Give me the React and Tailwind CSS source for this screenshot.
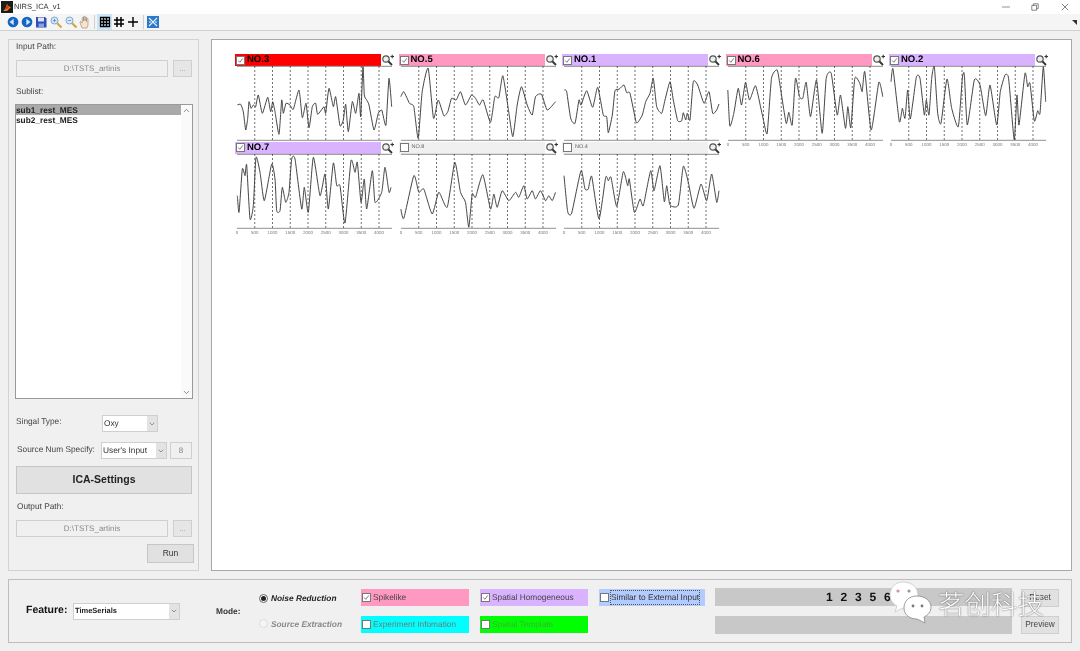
import React from "react";
import { ChevronDown, ChevronUp } from "lucide-react";

const parse = (s, ox, oy) => {
  const p = s.trim().split(/;\s*/).filter(Boolean).map((q) => {
    const [x, y] = q.split(",").map(Number);
    return [(x - ox) / 3, (y - oy) / 3];
  });
  let d = `M${p[0][0].toFixed(1)} ${p[0][1].toFixed(1)}`;
  const k = 0.09;
  for (let i = 0; i < p.length - 1; i++) {
    const a = p[Math.max(0, i - 1)], b = p[i], c = p[i + 1], e = p[Math.min(p.length - 1, i + 2)];
    const c1 = [b[0] + (c[0] - a[0]) * k, b[1] + (c[1] - a[1]) * k];
    const c2 = [c[0] - (e[0] - b[0]) * k, c[1] - (e[1] - b[1]) * k];
    d += `C${c1[0].toFixed(1)} ${c1[1].toFixed(1)} ${c2[0].toFixed(1)} ${c2[1].toFixed(1)} ${c[0].toFixed(1)} ${c[1].toFixed(1)}`;
  }
  return d;
};

const PINK = "bg-[#ff99c2]";
const PURPLE = "bg-[#d9b3ff]";

const charts = [
  { name: "NO.3", bg: "bg-[#ff0000]", on: true, ox: 36, oy: 63, d: "37,180;47,178;55,200;62,255;68,220;72,170;78,190;85,180;92,185;100,150;112,205;128,157;137,200;143,170;150,200;162,268;170,165;175,205;183,175;195,180;205,193;222,135;232,218;243,175;252,248;262,185;272,175;278,208;297,185;302,205;312,130;325,185;332,155;345,242;355,225;362,178;370,260;382,170;392,205;402,145;407,215;414,65;418,150;425,165;432,180;447,255;460,205;470,195;474,210;483,240;492,100;500,185" },
  { name: "NO.5", bg: PINK, on: true, ox: 526.5, oy: 63, d: "526,155;535,140;552,175;565,185;578,280;590,140;608,70;624,220;638,165;655,212;667,200;678,160;692,165;705,140;720,180;738,150;750,160;762,180;773,165;795,232;808,155;820,158;832,92;848,190;862,275;875,180;888,125;905,180;920,210;930,155;948,148;965,195;990,170" },
  { name: "NO.1", bg: PURPLE, on: true, ox: 27, oy: 48, d: "28,120;35,125;47,205;60,220;72,150;78,165;95,122;113,172;128,112;145,195;155,200;160,248;172,195;180,122;192,118;207,105;215,128;225,130;243,215;250,215;262,195;272,155;285,130;295,85;305,170;320,190;330,150;345,95;355,150;368,212;380,212;385,188;392,210;397,190;405,210;415,95;428,105;447,160;462,125;473,190;485,180;492,162" },
  { name: "NO.6", bg: PINK, on: true, labels: true, ox: 37.5, oy: 63, d: "37,135;43,243;55,205;68,130;78,180;90,112;102,165;120,122;135,185;145,230;155,265;168,100;185,75;195,130;212,235;220,202;230,240;240,100;252,155;262,160;272,112;285,215;303,105;320,265;332,100;347,85;365,210;375,150;390,250;397,185;406,248;418,100;433,115;440,140;448,80;467,255;490,112;502,155" },
  { name: "NO.2", bg: PURPLE, on: true, labels: true, ox: 528, oy: 63, d: "528,110;534,72;553,230;562,190;570,220;578,135;586,222;604,97;615,100;628,210;634,165;642,210;650,100;658,65;668,205;678,235;696,102;710,190;730,245;742,100;748,88;757,240;778,105;795,120;812,212;825,120;845,240;856,140;870,90;880,95;888,180;898,285;906,150;912,240;930,85;938,125;945,115;958,228;968,197;975,205;985,65;992,170" },
  { name: "NO.7", bg: PURPLE, on: true, labels: true, ox: 36, oy: 325, d: "37,450;42,500;52,370;60,390;65,358;75,520;85,480;93,335;105,380;118,465;140,355;150,400;155,495;165,495;172,425;182,470;192,440;200,340;210,340;230,490;238,425;250,500;265,335;285,450;300,385;310,490;325,352;335,420;345,420;360,532;378,345;390,380;397,350;408,470;418,400;425,490;442,375;450,470;470,440;480,365;492,440;498,425" },
  { name: "NO.8", bg: "bg-[#f0f0f0]", on: false, labels: true, ox: 526.5, oy: 325, d: "526,490;535,518;565,390;580,440;595,430;620,505;640,440;665,485;688,350;705,440;720,470;730,545;740,445;750,455;772,387;795,490;805,445;815,485;830,435;850,465;870,440;880,455;895,420;905,460;920,435;930,460;945,435;960,465;970,450;980,465;990,440" },
  { name: "NO.4", bg: "bg-[#f0f0f0]", on: false, labels: true, ox: 507, oy: 55, d: "507,120;518,228;530,232;558,105;570,160;580,160;590,122;612,250;632,125;640,135;648,125;665,212;685,108;698,150;703,130;718,230;735,190;745,210;767,105;777,165;795,90;808,198;815,150;825,208;850,208;865,92;880,140;897,218;918,145;935,195;950,115;965,200;972,165" },
];

const Tick = () => (
  <svg viewBox="0 0 9 9" className="w-full h-full">
    <path d="M1.5 4.5 L3.6 6.8 L7.5 1.8" fill="none" stroke="#555" strokeWidth="1" />
  </svg>
);

const Box = ({ on }) => (
  <span className="block w-[9px] h-[9px] shrink-0 bg-white border border-[#777]">
    {on && <Tick />}
  </span>
);

const Magnifier = () => (
  <svg viewBox="0 0 14 12" className="w-[14px] h-[12px] shrink-0">
    <circle cx="5" cy="5" r="3.2" fill="#eee" stroke="#555" strokeWidth="1.2" />
    <path d="M7.5 7.5 L11 11" stroke="#333" strokeWidth="1.8" />
    <path d="M9.5 2.5 H13 M11.2 0.8 V4.2" stroke="#333" strokeWidth="1.1" />
  </svg>
);

function Chart({ c }) {
  const ticks = [0, 500, 1000, 1500, 2000, 2500, 3000, 3500, 4000];
  return (
    <div className="h-[87.5px]">
      <div className="flex h-3 w-[160px] items-center">
        <div className={`flex h-3 w-[146px] items-center pl-[1px] gap-[2px] ${c.bg}`}>
          <Box on={c.on} />
          <span className={c.on ? "pt-[1px] text-[9.5px] font-bold text-black" : "text-[5.5px] text-[#666] pl-[1px]"}>{c.name}</span>
        </div>
        <Magnifier />
      </div>
      <svg width="155" height="75" viewBox="0 0 155 75" className="ml-[2px] overflow-visible">
        <line x1="0" y1="0.3" x2="155" y2="0.3" stroke="#8a8a8a" strokeWidth="1" />
        {ticks.slice(1).map((t) => (
          <line key={t} x1={(t / 500) * 17.75} y1="0" x2={(t / 500) * 17.75} y2="74" stroke="#333" strokeWidth="0.7" strokeDasharray="2 2" />
        ))}
        <path d={parse(c.d, c.ox, c.oy)} fill="none" stroke="#3a3a3a" strokeWidth="0.95" strokeLinejoin="round" />
        <line x1="0" y1="74.3" x2="155" y2="74.3" stroke="#8f8f8f" strokeWidth="1" />
        {c.labels && ticks.map((t) => (
          <text key={t} x={(t / 500) * 17.75} y="79.5" fontSize="4.4" fill="#777" textAnchor="middle" fontFamily="Liberation Sans">{t}</text>
        ))}
      </svg>
    </div>
  );
}

const Select = ({ label, className, text = "text-[8.3px] text-[#333]" }) => (
  <div className={`flex items-center bg-white border border-[#cfcfcf] ${className}`}>
    <span className={`flex-1 pl-[1px] truncate ${text}`}>{label}</span>
    <span className="w-[10px] h-full flex items-center justify-center bg-[#e3e3e3]">
      <ChevronDown size={8} color="#666" />
    </span>
  </div>
);

const Input = () => (
  <div className="flex items-center gap-[5px]">
    <div className="w-[152px] h-[17px] flex items-center justify-center border border-[#cfcfcf] bg-[#f0f0f0] text-[8px] text-[#8a8a8a]">D:\TSTS_artinis</div>
    <div className="w-[19px] h-[17px] flex items-center justify-center border border-[#cfcfcf] bg-[#e6e6e6] text-[8px] text-[#999]">...</div>
  </div>
);

const Label = ({ children, className = "" }) => (
  <div className={`h-3 leading-3 text-[8.3px] text-[#444] ${className}`}>{children}</div>
);

const Check = ({ bg, on, text, label, className = "" }) => (
  <div className={`flex items-center gap-[2px] h-[17px] pl-[1px] ${bg} ${className}`}>
    <Box on={on} />
    <span className={`text-[8.3px] whitespace-nowrap ${text}`}>{label}</span>
  </div>
);

const Arrow = ({ d }) => (
  <svg viewBox="0 0 12 12" className="w-[14px] h-[14px]">
    <circle cx="6" cy="6" r="4.6" fill="#1466c0" />
    <path d={d} fill="#cfe6ff" />
  </svg>
);

const Zoomer = ({ plus }) => (
  <svg viewBox="0 0 14 14" className="w-[14px] h-[14px]">
    <circle cx="5.5" cy="5.5" r="3.5" fill="#d8ecff" stroke="#7ea6c9" strokeWidth="1" />
    <path d={plus ? "M3.8 5.5H7.2M5.5 3.8V7.2" : "M3.8 5.5H7.2"} stroke="#5a87b0" strokeWidth="0.8" />
    <path d="M8.2 8.2 L12.5 12.5" stroke="#d9a441" strokeWidth="2.2" />
  </svg>
);

const Toolbar = () => (
  <div className="flex items-center h-4 pl-[6px] bg-[#f5f5f5]">
    <Arrow d="M3 6 L6.6 3.2 V8.8 Z" />
    <Arrow d="M9 6 L5.4 3.2 V8.8 Z" />
    <svg viewBox="0 0 14 14" className="w-[14px] h-[14px]">
      <path d="M2 2H11L12.5 3.5V12.5H2Z" fill="#2f4fb5" />
      <rect x="4" y="2.5" width="6" height="4" fill="#dfe8fb" />
      <rect x="4.5" y="8.5" width="5.5" height="4" fill="#8aa0de" />
    </svg>
    <span className="w-px" />
    <Zoomer plus />
    <span className="w-px" />
    <Zoomer />
    <svg viewBox="0 0 14 14" className="w-[14px] h-[14px]">
      <path d="M4 13 L2 7.5 C1.6 6.5 2.8 6 3.4 7 L4.2 8 V3 C4.2 2 5.4 2 5.5 3 V6 V2 C5.6 1 6.9 1 7 2 V6 V2.6 C7.1 1.6 8.4 1.6 8.5 2.6 V6.5 V4 C8.6 3 9.9 3 10 4 V9 C10 11 9.4 12 9 13 Z" fill="#fbe3c8" stroke="#9a8f86" strokeWidth="0.7" />
    </svg>
    <span className="ml-[2px] w-px h-[14px] bg-[#cfcfcf]" />
    <span className="ml-[2px] w-[15px] h-4 flex items-center justify-center bg-[#cde6f7]">
      <svg viewBox="0 0 12 12" className="w-[12px] h-[12px]">
        <path d="M1 1.5H11M1 4.5H11M1 7.5H11M1 10.5H11M1.5 1V11M4.5 1V11M7.5 1V11M10.5 1V11" stroke="#000" strokeWidth="1.3" />
      </svg>
    </span>
    <span className="w-[14px] flex justify-center">
      <svg viewBox="0 0 12 12" className="w-[12px] h-[12px]">
        <path d="M1 4H11M1 8H11M4 1V11M8 1V11" stroke="#000" strokeWidth="1.5" />
      </svg>
    </span>
    <span className="w-[14px] flex justify-center">
      <svg viewBox="0 0 12 12" className="w-[12px] h-[12px]">
        <path d="M1 6H11M6 1V11" stroke="#000" strokeWidth="1.4" />
      </svg>
    </span>
    <span className="ml-[3px] w-px h-[14px] bg-[#cfcfcf]" />
    <span className="ml-[2px] w-[14px] flex justify-center">
      <svg viewBox="0 0 12 12" className="w-[12px] h-[12px]">
        <rect width="12" height="12" fill="#2a78c8" />
        <path d="M2 2 L6 6 L10 2 M2 10 L6 6 L10 10 M2 6H4 M8 6H10" stroke="#e8f4ff" strokeWidth="1.1" fill="none" />
      </svg>
    </span>
    <span className="ml-auto mr-[2px]">
      <svg viewBox="0 0 6 6" className="w-[6px] h-[6px]"><path d="M0 1H5V6Z" fill="#333" /></svg>
    </span>
  </div>
);

const Radio = ({ on, label, dim }) => (
  <div className="flex items-center gap-[3px]">
    <span className={`w-[9px] h-[9px] rounded-full border flex items-center justify-center ${dim ? "border-[#ddd] bg-[#f5f5f5]" : "border-[#666] bg-white"}`}>
      {on && <span className="w-[5px] h-[5px] rounded-full bg-[#222]" />}
    </span>
    <span className={`text-[8.3px] font-bold italic whitespace-nowrap ${dim ? "text-[#888]" : "text-[#222]"}`}>{label}</span>
  </div>
);

export default function App() {
  return (
    <div className="relative w-[1080px] h-[651px] overflow-hidden bg-[#f0f0f0] blur-[0.4px] [text-rendering:geometricPrecision] font-['Liberation_Sans',Arial,sans-serif]">
      <div className="flex items-center h-[14px] bg-white">
        <svg viewBox="0 0 12 12" className="ml-[1px] w-[12px] h-[12px]">
          <rect width="12" height="12" fill="#1c1c1c" />
          <path d="M2 10 C4 9 5 6 6 3 C7 5 8 6 10 6 L6 10 Z" fill="#f08020" />
          <path d="M6 3 L8 7 L4 9 Z" fill="#d04010" />
        </svg>
        <span className="ml-[1px] text-[7.5px] text-[#333]">NIRS_ICA_v1</span>
        <svg viewBox="0 0 10 10" className="ml-auto w-[8px] h-[8px]"><path d="M0 5H10" stroke="#777" strokeWidth="1" /></svg>
        <svg viewBox="0 0 10 10" className="ml-[21px] w-[8px] h-[8px]"><path d="M1 3H7V9H1Z M3 3V1H9V7H7" fill="none" stroke="#666" strokeWidth="1" /></svg>
        <svg viewBox="0 0 10 10" className="ml-[22px] mr-[11px] w-[8px] h-[8px]"><path d="M1 1L9 9M9 1L1 9" stroke="#666" strokeWidth="1" /></svg>
      </div>
      <Toolbar />
      <div className="h-px bg-[#d0d0d0]" />

      <div className="flex gap-3 pl-2 pt-2">
        <div className="w-[191px] h-[532px] box-border border border-[#d2d2d2] pl-[6px] flex flex-col">
          <Label className="pl-[1px]">Input Path:</Label>
          <div className="mt-2 pl-[1px]"><Input /></div>
          <Label className="mt-[8px] pl-[1px]">Sublist:</Label>
          <div className="mt-[7px] w-[178px] h-[295px] box-border border border-[#9a9a9a] bg-white flex">
            <div className="flex-1 font-bold text-[8.3px] text-[#222] leading-[10px]">
              <div className="bg-[#a9a9a9]">sub1_rest_MES</div>
              <div>sub2_rest_MES</div>
            </div>
            <div className="w-[11px] flex flex-col justify-between items-center py-[1px] bg-[#fafafa]">
              <ChevronUp size={9} color="#666" />
              <ChevronDown size={9} color="#666" />
            </div>
          </div>
          <div className="mt-4 flex items-center h-[17px]">
            <span className="w-[87px] pl-[1px] pb-[4px] text-[8.3px] text-[#444]">Singal Type:</span>
            <Select label="Oxy" className="w-[56px] h-[17px]" />
          </div>
          <div className="mt-[10px] flex items-center h-[17px]">
            <span className="w-[86px] pl-[2px] pb-[2px] text-[8.3px] text-[#444] whitespace-nowrap">Source Num Specify:</span>
            <Select label="User's Input" className="w-[66px] h-[17px]" />
            <div className="ml-[3px] w-[22px] h-[17px] flex items-center justify-center border border-[#cfcfcf] text-[8px] text-[#888]">8</div>
          </div>
          <button className="mt-[7px] ml-[1px] w-[176px] h-[28px] border border-[#c6c6c6] bg-[#e1e1e1] text-[10.5px] font-bold text-[#222]">ICA-Settings</button>
          <Label className="mt-[6px] pl-[2px]">Output Path:</Label>
          <div className="mt-2 pl-[1px]"><Input /></div>
          <button className="mt-[7px] ml-[132px] w-[47px] h-[19px] border border-[#c6c6c6] bg-[#e1e1e1] text-[8.5px] text-[#333]">Run</button>
        </div>

        <div className="w-[861px] h-[532px] box-border border border-[#a8a8a8] bg-white pl-[23px] pt-[14px]">
          <div className="grid grid-cols-[repeat(5,163.5px)] auto-rows-[87.5px]">
            {charts.map((c) => <Chart key={c.name} c={c} />)}
          </div>
        </div>
      </div>

      <div className="mt-2 ml-2 w-[1064px] h-[64px] box-border border border-[#bdbdbd] flex items-center">
        <span className="ml-[17px] w-[47px] text-[10.5px] font-bold text-[#111]">Feature:</span>
        <Select label="TimeSerials" className="w-[107px] h-[17px]" text="text-[7.5px] font-bold text-[#222]" />
        <span className="ml-[36px] w-[43px] text-[8.3px] font-bold text-[#333]">Mode:</span>
        <div className="h-full flex flex-col justify-between pt-[12px] pb-[12px] w-[102px]">
          <Radio on label="Noise Reduction" />
          <Radio dim label="Source Extraction" />
        </div>
        <div className="grid grid-cols-[108px_108px_106px] gap-x-[11px] gap-y-[10px]">
          <Check bg="bg-[#ff99c2]" on text="text-[#444]" label="Spikelike" />
          <Check bg="bg-[#d9b3ff]" on text="text-[#444]" label="Spatial Homogeneous" />
          <Check bg="bg-[#b3ccff]" text="text-[#333] outline-1 outline-dotted outline-[#555]" label="Similar to External Input" />
          <Check bg="bg-[#00ffff]" text="text-[#777]" label="Experiment Infomation" />
          <Check bg="bg-[#00ff00]" text="text-[#3fae3f]" label="Spatial Template" />
        </div>
        <div className="ml-[10px] flex flex-col gap-[10px]">
          <div className="w-[297px] h-[18px] bg-[#c8c8c8] flex items-center pl-[111px] gap-[7.8px] text-[12px] font-bold text-[#111]">
            <span>1</span><span>2</span><span>3</span><span>5</span><span>6</span>
          </div>
          <div className="w-[297px] h-[18px] bg-[#c8c8c8]" />
        </div>
        <div className="ml-[9px] flex flex-col gap-[9px]">
          <button className="w-[38px] h-[18px] border border-[#cfcfcf] bg-[#e1e1e1] text-[8.3px] text-[#444]">Reset</button>
          <button className="w-[38px] h-[18px] border border-[#cfcfcf] bg-[#e1e1e1] text-[8.3px] text-[#444]">Preview</button>
        </div>
      </div>

      <div className="absolute left-[889px] top-[581px] flex items-center pointer-events-none">
        <svg viewBox="0 0 44 44" className="w-[44px] h-[44px]">
          <path d="M14 1 C5 1 1 8 1 14 C1 19 4 23 8 25 L6 31 L14 27 C20 28 28 24 29 14 C29 6 22 1 14 1 Z" fill="#fff" stroke="#bbb" strokeWidth="0.6" />
          <path d="M28 15 C19 15 15 21 15 27 C15 34 21 38 28 38 L36 42 L35 36 C39 34 42 31 42 26 C42 20 36 15 28 15 Z" fill="#fff" stroke="#888" strokeWidth="0.8" />
          <circle cx="9" cy="10" r="1.6" fill="#c99" />
          <circle cx="20" cy="10" r="1.6" fill="#999" />
          <circle cx="24" cy="25" r="1.4" fill="#777" />
          <circle cx="33" cy="25" r="1.4" fill="#777" />
        </svg>
        <span className="ml-[5px] text-[26.5px] leading-none font-light text-white [text-shadow:0_0_1.5px_#333] font-['Noto_Sans_CJK_SC',sans-serif]">茗创科技</span>
      </div>
    </div>
  );
}
